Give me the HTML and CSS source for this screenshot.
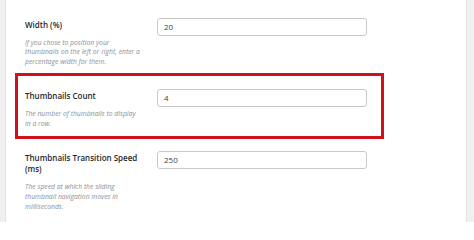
FILE: index.html
```html
<!DOCTYPE html>
<html>
<head>
<meta charset="utf-8">
<link rel="stylesheet" href="styles.css">
</head>
<body>
<div class="page">
  <div class="side-left"></div>
  <div class="main">
    <div class="row">
      <div class="info">
        <div class="label">Width (%)</div>
        <div class="desc">If you chose to position your<br>thumbnails on the left or right, enter a<br>percentage width for them.</div>
      </div>
      <div class="field">20</div>
    </div>
    <div class="row highlighted">
      <div class="info">
        <div class="label">Thumbnails Count</div>
        <div class="desc">The number of thumbnails to display<br>in a row.</div>
      </div>
      <div class="field">4</div>
      <div class="mark"></div>
    </div>
    <div class="row">
      <div class="info">
        <div class="label">Thumbnails Transition Speed (ms)</div>
        <div class="desc">The speed at which the sliding<br>thumbnail navigation moves in<br>milliseconds.</div>
      </div>
      <div class="field">250</div>
    </div>
  </div>
  <div class="side-right"></div>
</div>
</body>
</html>
```
FILE: styles.css
```css
html, body {
  margin: 0;
  padding: 0;
  background: #ffffff;
}
body {
  font-family: "Open Sans", "Noto Sans", sans-serif;
  color: #2c3338;
}
.page {
  display: flex;
  width: 474px;
  height: 222px;
  overflow: hidden;
}
.side-left {
  width: 5px;
  background: #f0f0f1;
  border-right: 1px solid #e4e4e4;
  flex: none;
}
.main {
  flex: 1;
  background: #ffffff;
  padding-left: 9px;
  padding-top: 2px;
}
.side-right {
  width: 7px;
  flex: none;
  background: #f0f0f1;
  border-left: 1px solid #e4e4e4;
}
.row {
  position: relative;
  width: 369px;
  display: grid;
  grid-template-columns: 132px 210px;
  padding: 16px 0 6.5px 10px;
  box-sizing: border-box;
}
.label {
  font-size: 8px;
  font-weight: 600;
  line-height: 11.5px;
  margin-top: 1px;
  color: #23282d;
  padding-right: 14px;
}
.desc {
  margin-top: 7px;
  font-size: 6.8px;
  line-height: 9.8px;
  font-style: italic;
  color: #8c8f94;
  white-space: nowrap;
}
.field {
  height: 18px;
  box-sizing: border-box;
  border: 1px solid #c9c9c9;
  border-radius: 3px;
  font-size: 8px;
  line-height: 16px;
  padding-left: 6px;
  color: #3c434a;
  background: #fff;
}
.mark {
  position: absolute;
  left: 0;
  top: 0;
  right: 0;
  bottom: -4px;
  border: 3px solid #d0101a;
  box-sizing: border-box;
  pointer-events: none;
}
```
